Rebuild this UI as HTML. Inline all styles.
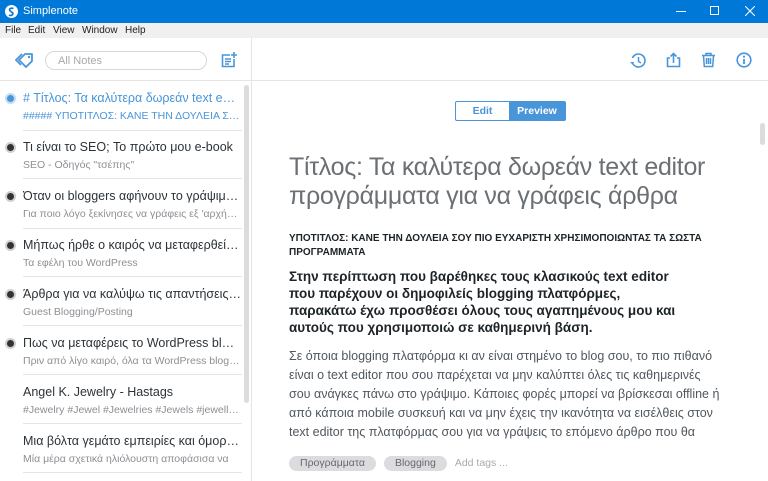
<!DOCTYPE html>
<html><head><meta charset="utf-8"><style>
*{margin:0;padding:0;box-sizing:border-box}
body{width:768px;height:481px;overflow:hidden;background:#fff;font-family:"Liberation Sans","DejaVu Sans",sans-serif;position:relative}
.ab{position:absolute}
#tb{left:0;top:0;width:768px;height:23px;background:#0078d7;color:#fff;font-size:11px}
#mb{left:0;top:23px;width:768px;height:15px;background:#f0f0f0;font-size:10px;color:#222}
#mb span{position:absolute;top:2px}
.line{background:#e4e4e4}
.note{position:absolute;left:23px;width:218px;white-space:nowrap;overflow:hidden}
.note div{overflow:hidden;text-overflow:ellipsis}
.note .t{font-size:12.5px;color:#2c3338;height:17px}
.note .s{font-size:10.5px;color:#8c8f94;margin-top:2px}
.dot{position:absolute;left:7px;width:7px;height:7px;border-radius:50%;background:#333;box-shadow:0 0 0 2px #d0d0d0}
.sep{position:absolute;left:23px;width:219px;height:1px;background:#e4e4e4}
.tag{display:inline-block;background:#dcdcde;border-radius:10px;padding:0 11px;height:15px;line-height:15px;font-size:10.5px;color:#646970;margin-right:8px}
.nw{white-space:nowrap}
</style></head><body>
<div id="tb" class="ab">
<svg class="ab" style="left:5px;top:5px" width="13" height="13" viewBox="0 0 13 13"><circle cx="6.5" cy="6.5" r="6.5" fill="#fff"/><path d="M8.5 3.5 C6 2.5 3.5 4 5 5.8 S9 7.5 7.5 9.5 S4 10 4 10" stroke="#0078d7" stroke-width="1.6" fill="none"/></svg>
<span class="ab" style="left:23px;top:5px">Simplenote</span>
<div class="ab" style="left:676px;top:11px;width:10px;height:1px;background:#fff"></div>
<div class="ab" style="left:710px;top:6px;width:9px;height:9px;border:1px solid #fff"></div>
<svg class="ab" style="left:745px;top:6px" width="10" height="10"><path d="M0 0L10 10M10 0L0 10" stroke="#fff" stroke-width="1.1"/></svg>
</div>
<div id="mb" class="ab"><span style="left:5px">File</span><span style="left:28px">Edit</span><span style="left:53px">View</span><span style="left:82px">Window</span><span style="left:125px">Help</span></div>
<svg class="ab" style="left:15px;top:52px" width="20" height="16" viewBox="0 0 20 16"><path d="M10 2 H17 V9 L11 15 L4 8 Z" fill="none" stroke="#4895d9" stroke-width="1.8" stroke-linejoin="round"/><path d="M7 2 L1 8 L6 13" fill="none" stroke="#4895d9" stroke-width="1.8"/><circle cx="14" cy="5" r="1.2" fill="#4895d9"/></svg>
<div class="ab" style="left:45px;top:51px;width:162px;height:19px;border:1px solid #d8d8d8;border-radius:10px;font-size:11px;color:#a7aaad;padding:3px 0 0 12px">All Notes</div>
<svg class="ab" style="left:221px;top:52px" width="16" height="16" viewBox="0 0 16 16"><path d="M9 3H1.5V14.5H13V7" fill="none" stroke="#4895d9" stroke-width="1.6"/><path d="M4 7H10M4 9.5H10M4 12H8" stroke="#4895d9" stroke-width="1.4"/><path d="M13 0V6M10 3H16" stroke="#4895d9" stroke-width="1.6"/></svg>
<svg class="ab" style="left:630px;top:53px" width="16" height="16" viewBox="0 0 16 16"><path d="M3 11A6.5 6.5 0 1 0 2.5 5" fill="none" stroke="#4895d9" stroke-width="1.6"/><path d="M8.5 4V8.5L11 10" fill="none" stroke="#4895d9" stroke-width="1.5"/><path d="M0 9L3 12L4 9Z" fill="#4895d9"/></svg>
<svg class="ab" style="left:666px;top:52px" width="15" height="16" viewBox="0 0 15 16"><path d="M4 6H1.5V14.5H13.5V6H11" fill="none" stroke="#4895d9" stroke-width="1.6"/><path d="M7.5 11V1.5M4.5 4.5L7.5 1.5L10.5 4.5" fill="none" stroke="#4895d9" stroke-width="1.6"/></svg>
<svg class="ab" style="left:701px;top:52px" width="15" height="16" viewBox="0 0 15 16"><path d="M1 3.5H14M5 3.5V1.5H10V3.5M2.5 3.5L3.3 14.5H11.7L12.5 3.5M5.5 6V12M7.5 6V12M9.5 6V12" fill="none" stroke="#4895d9" stroke-width="1.5"/></svg>
<svg class="ab" style="left:736px;top:52px" width="16" height="16" viewBox="0 0 16 16"><circle cx="8" cy="8" r="6.8" fill="none" stroke="#4895d9" stroke-width="1.6"/><path d="M8 7V12" stroke="#4895d9" stroke-width="1.8"/><circle cx="8" cy="4.6" r="1.1" fill="#4895d9"/></svg>
<div class="ab line" style="left:0;top:80px;width:768px;height:1px"></div>
<div class="ab line" style="left:251px;top:38px;width:1px;height:443px"></div>
<div class="ab" style="left:244px;top:85px;width:5px;height:318px;background:#dcdcde;border-radius:3px"></div>
<div class="ab" style="left:760px;top:123px;width:5px;height:22px;background:#dcdcde;border-radius:3px"></div>
<div class="dot" style="top:95px;background:#4895d9;box-shadow:0 0 0 2px #c5dcf2"></div>
<div class="note" style="top:91px"><div class="t" style="color:#4895d9"># Τίτλος: Τα καλύτερα δωρεάν text editor</div><div class="s" style="color:#4895d9">##### ΥΠΟΤΙΤΛΟΣ: ΚΑΝΕ ΤΗΝ ΔΟΥΛΕΙΑ ΣΟΥ ΠΙΟ</div></div>
<div class="sep" style="top:130px"></div>
<div class="dot" style="top:144px"></div>
<div class="note" style="top:140px"><div class="t">Τι είναι το SEO; Το πρώτο μου e-book</div><div class="s">SEO - Οδηγός "τσέπης"</div></div>
<div class="sep" style="top:178px"></div>
<div class="dot" style="top:193px"></div>
<div class="note" style="top:189px"><div class="t">Όταν οι bloggers αφήνουν το γράψιμο και</div><div class="s">Για ποιο λόγο ξεκίνησες να γράφεις εξ 'αρχής το blog</div></div>
<div class="sep" style="top:228px"></div>
<div class="dot" style="top:242px"></div>
<div class="note" style="top:238px"><div class="t">Μήπως ήρθε ο καιρός να μεταφερθείς στο</div><div class="s">Τα εφέλη του WordPress</div></div>
<div class="sep" style="top:276px"></div>
<div class="dot" style="top:291px"></div>
<div class="note" style="top:287px"><div class="t">Άρθρα για να καλύψω τις απαντήσεις μου</div><div class="s">Guest Blogging/Posting</div></div>
<div class="sep" style="top:325px"></div>
<div class="dot" style="top:340px"></div>
<div class="note" style="top:336px"><div class="t">Πως να μεταφέρεις το WordPress blog σου</div><div class="s">Πριν από λίγο καιρό, όλα τα WordPress blogs μου</div></div>
<div class="sep" style="top:374px"></div>
<div class="note" style="top:385px"><div class="t">Angel K. Jewelry - Hastags</div><div class="s">#Jewelry #Jewel #Jewelries #Jewels #jewellery</div></div>
<div class="sep" style="top:423px"></div>
<div class="note" style="top:434px"><div class="t">Μια βόλτα γεμάτο εμπειρίες και όμορφες</div><div class="s">Μία μέρα σχετικά ηλιόλουστη αποφάσισα να</div></div>
<div class="sep" style="top:472px"></div>
<div class="ab" style="left:455px;top:101px;width:111px;height:20px;border:1px solid #4895d9;border-radius:2px;font-size:10.5px;font-weight:bold">
<div class="ab" style="left:0;top:0;width:53px;height:18px;color:#4895d9;text-align:center;line-height:18px">Edit</div>
<div class="ab" style="left:53px;top:0;width:56px;height:18px;background:#4895d9;color:#fff;text-align:center;line-height:18px">Preview</div>
</div>
<div class="ab nw" style="left:289px;top:153px;font-size:25px;color:#6b7075;line-height:29px;letter-spacing:-0.3px">Τίτλος: Τα καλύτερα δωρεάν text editor<br>προγράμματα για να γράφεις άρθρα</div>
<div class="ab nw" style="left:289px;top:232px;font-size:10px;font-weight:bold;color:#1d2327;line-height:14px">ΥΠΟΤΙΤΛΟΣ: ΚΑΝΕ ΤΗΝ ΔΟΥΛΕΙΑ ΣΟΥ ΠΙΟ ΕΥΧΑΡΙΣΤΗ ΧΡΗΣΙΜΟΠΟΙΩΝΤΑΣ ΤΑ ΣΩΣΤΑ<br>ΠΡΟΓΡΑΜΜΑΤΑ</div>
<div class="ab nw" style="left:289px;top:268px;font-size:13.5px;font-weight:bold;color:#1d2327;line-height:17px">Στην περίπτωση που βαρέθηκες τους κλασικούς text editor<br>που παρέχουν οι δημοφιλείς blogging πλατφόρμες,<br>παρακάτω έχω προσθέσει όλους τους αγαπημένους μου και<br>αυτούς που χρησιμοποιώ σε καθημερινή βάση.</div>
<div class="ab nw" style="left:289px;top:347px;font-size:12.5px;color:#50575e;line-height:19px">Σε όποια blogging πλατφόρμα κι αν είναι στημένο το blog σου, το πιο πιθανό<br>είναι ο text editor που σου παρέχεται να μην καλύπτει όλες τις καθημερινές<br>σου ανάγκες πάνω στο γράψιμο. Κάποιες φορές μπορεί να βρίσκεσαι offline ή<br>από κάποια mobile συσκευή και να μην έχεις την ικανότητα να εισέλθεις στον<br>text editor της πλατφόρμας σου για να γράψεις το επόμενο άρθρο που θα</div>
<div class="ab nw" style="left:289px;top:453px"><span class="tag">Προγράμματα</span><span class="tag">Blogging</span><span style="font-size:10.5px;color:#a7aaad">Add tags ...</span></div>
</body></html>
